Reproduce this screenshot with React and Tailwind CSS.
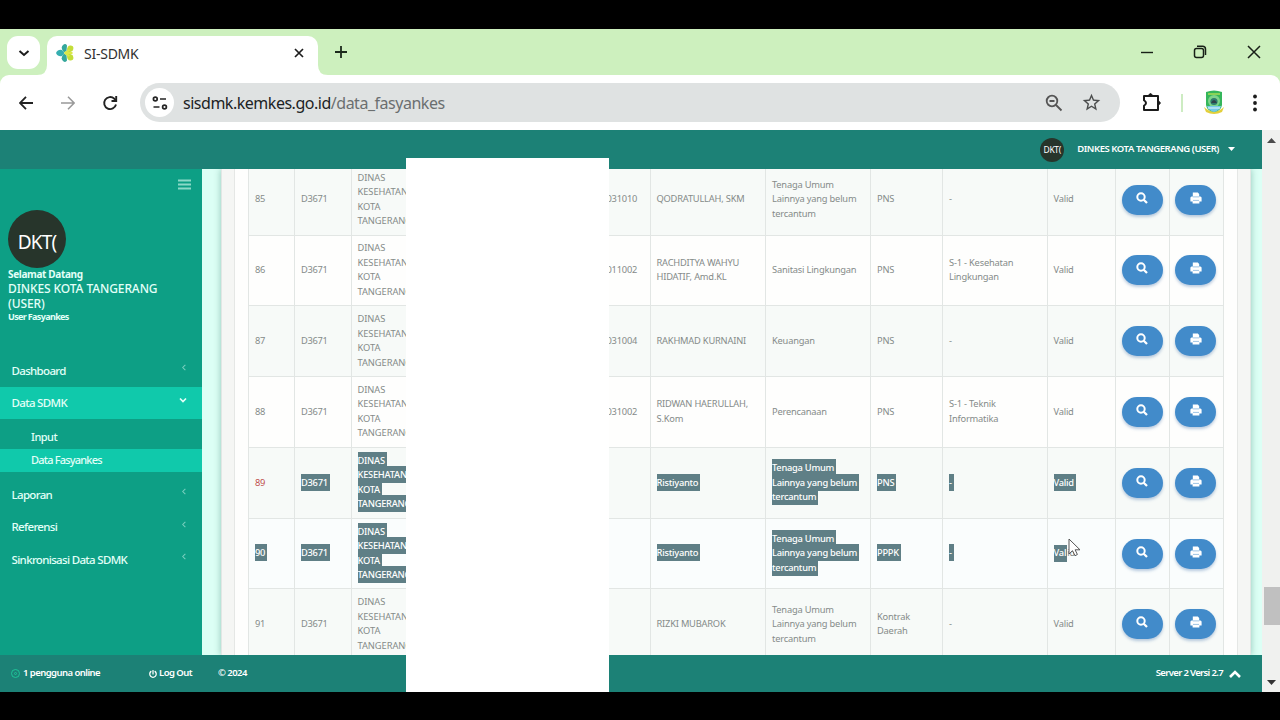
import { FaPowerOff } from "react-icons/fa";
import { MdOutlineStarBorder } from "react-icons/md";

const dinas = ["DINAS", "KESEHATAN", "KOTA", "TANGERANG"];
const umum = ["Tenaga Umum", "Lainnya yang belum", "tercantum"];

const rows = [
  { no: "85", nik: "031010", nama: ["QODRATULLAH, SKM"], jenis: umum, status: ["PNS"], didik: ["-"] },
  { no: "86", nik: "011002", nama: ["RACHDITYA WAHYU", "HIDATIF, Amd.KL"], jenis: ["Sanitasi Lingkungan"], status: ["PNS"], didik: ["S-1 - Kesehatan", "Lingkungan"] },
  { no: "87", nik: "031004", nama: ["RAKHMAD KURNAINI"], jenis: ["Keuangan"], status: ["PNS"], didik: ["-"] },
  { no: "88", nik: "031002", nama: ["RIDWAN HAERULLAH,", "S.Kom"], jenis: ["Perencanaan"], status: ["PNS"], didik: ["S-1 - Teknik", "Informatika"] },
  { no: "89", nik: "", nama: ["Ristiyanto"], jenis: umum, status: ["PNS"], didik: ["-"], selected: true, red: true },
  { no: "90", nik: "", nama: ["Ristiyanto"], jenis: umum, status: ["PPPK"], didik: ["-"], selected: true, partial: true },
  { no: "91", nik: "", nama: ["RIZKI MUBAROK"], jenis: umum, status: ["Kontrak", "Daerah"], didik: ["-"] },
];

const SELECTED = "bg-[#5f7f86] text-white font-medium tracking-[-0.25px] py-[2px] pr-[2px]";

function Cell({ lines, selected, className = "pl-[6px]" }) {
  return (
    <div
      className={`flex flex-col justify-center border-r border-b border-[#e2e6e4] whitespace-nowrap overflow-hidden ${className}`}
    >
      {lines.map((line) => (
        <div key={line} className="h-[14.5px] leading-[14.5px]">
          <span className={selected ? SELECTED : ""}>{line}</span>
        </div>
      ))}
    </div>
  );
}

function RoundButton({ children }) {
  return (
    <div className="flex items-center justify-center border-r border-b border-[#e2e6e4]">
      <button className="mr-[1px] flex h-[30px] w-[41px] items-center justify-center rounded-[15px] bg-[#428bca] pb-[4px] text-white shadow-[0_2px_3px_rgba(60,110,170,0.35)]">
        {children}
      </button>
    </div>
  );
}

function SearchIcon() {
  return (
    <svg viewBox="0 0 12 12" className="size-[12px]" fill="none" stroke="currentColor" strokeWidth="2">
      <circle cx="5" cy="5" r="3.7" />
      <path d="m7.7 7.7 3.3 3.3" strokeWidth="2.3" />
    </svg>
  );
}

function PrintIcon() {
  return (
    <svg viewBox="0 0 12 12" className="size-[12px]" fill="currentColor">
      <path d="M2.8.5h5l1.4 1.4V5H2.800Z" />
      <path d="M1.600 4.500h8.800Q11.600 4.500 11.600 6v3.500H.4V6q0-1.500 1.200-1.500Z" />
      <path d="M2.600 8h6.800v3.500H2.600Z" />
      <path d="M2.800 4.900h6.400M3 8.400h6" stroke="#5b9bd2" strokeWidth=".6" />
    </svg>
  );
}

function TableRow({ row, striped }) {
  const sel = row.selected;
  return (
    <div
      className={`grid h-[70.8px] shrink-0 grid-cols-[46px_56.5px_80px_219px_115.5px_105px_72px_104.5px_68.5px_54px_53.5px] border-l border-[#e2e6e4] ${striped ? "bg-[#f7faf8]" : row.partial ? "bg-[#fafdfd]" : "bg-[#fefefd]"}`}
    >
      <Cell lines={[row.no]} selected={sel && !row.red} className={row.red ? "pl-[6px] text-[#c0504d]" : "pl-[6px]"} />
      <Cell lines={["D3671"]} selected={sel} className="pl-[6px] tracking-[-0.3px]" />
      <Cell lines={dinas} selected={sel} className="pl-[6px] tracking-[-0.05px]" />
      <Cell lines={[row.nik]} className="pl-[175px]" />
      <Cell lines={row.nama} selected={sel} />
      <Cell lines={row.jenis} selected={sel} />
      <Cell lines={row.status} selected={sel} />
      <Cell lines={row.didik} selected={sel} />
      {row.partial ? (
        <div className="flex items-center border-r border-b border-[#e2e6e4] pl-[6px] leading-[12.5px]">
          <span className="bg-[#5f7f86] py-[2px] pr-[1px] font-medium text-white">Val</span>
          <span>id</span>
        </div>
      ) : (
        <Cell lines={["Valid"]} selected={sel} />
      )}
      <RoundButton>
        <SearchIcon />
      </RoundButton>
      <RoundButton>
        <PrintIcon />
      </RoundButton>
    </div>
  );
}

function Favicon() {
  return (
    <svg viewBox="0 0 18 18" className="size-[18px]">
      <path d="M7 1q2.500-2 4 .5L10.500 7 8 8.500Q4 4 7 1Z" fill="#35a79c" />
      <path d="M7 17q2.500 2 4-.5L10.500 11 8 9.500Q4 14 7 17Z" fill="#35a79c" />
      <path d="M0 9q2-4 6-3L8.500 9 6 12Q2 13 0 9Z" fill="#36aeb0" />
      <path d="M11 6.500q0-5.500 4-5T16.500 7L12 9Z" fill="#c3dd3a" />
      <path d="M11 11.500q0 5.500 4 5t1.500-5.500L12 9Z" fill="#c3dd3a" />
      <path d="M8.500 9l5-3M8.500 9h8M8.500 9l5 3" stroke="#dbe84a" strokeWidth="1.800" />
    </svg>
  );
}

function Crest() {
  return (
    <svg viewBox="0 0 22 24" className="h-[24px] w-[22px]">
      <path d="M1 17q10 9 20 0l-2 5q-8 4-16 0Z" fill="#e3cf3c" />
      <path d="M3 2q8-3 16 0v13q-1 6-8 7-7-1-8-7Z" fill="#35b65b" />
      <path d="M5 4h12" stroke="#a8dc54" strokeWidth="1.5" />
      <circle cx="11" cy="11" r="6" fill="#7ed38b" />
      <circle cx="11" cy="11.5" r="3.6" fill="#2f7b6d" />
      <path d="M8 13q3-6 6 0Z" fill="#30404a" />
      <path d="M4 16h14q-1 4-7 6-6-2-7-6Z" fill="#76c9e8" />
      <path d="M5 18h12" stroke="#e5f8ff" />
    </svg>
  );
}

function TabStrip() {
  return (
    <div className="flex h-[46px] bg-[#cdf0be]">
      <div className="mt-[7px] ml-[7px] flex size-[33px] items-center justify-center rounded-[11px] bg-white">
        <svg viewBox="0 0 12 12" className="size-[12px]" fill="none" stroke="#1c1c1c" strokeWidth="2">
          <path d="m1.5 4 4.5 4 4.5-4" />
        </svg>
      </div>
      <svg viewBox="0 0 10 10" className="-ml-[3px] size-[10px] self-end" fill="#fff">
        <path d="M10 0v10H0Q10 10 10 0Z" />
      </svg>
      <div className="mt-[7px] flex w-[271px] items-center rounded-t-[10px] bg-white pr-[14px] pb-[5px] pl-[9px]">
        <Favicon />
        <span className="ml-[10px] flex-1 text-[14px] tracking-[-0.25px] text-[#303030]">SI-SDMK</span>
        <svg viewBox="0 0 10 10" className="size-[10px]" stroke="#1d1d1d" strokeWidth="1.7">
          <path d="m1 1 8 8M9 1 1 9" />
        </svg>
      </div>
      <svg viewBox="0 0 10 10" className="size-[10px] self-end" fill="#fff">
        <path d="M0 0v10h10Q0 10 0 0Z" />
      </svg>
      <svg viewBox="0 0 14 14" className="mt-[16px] ml-[6px] size-[14px]" stroke="#1c2a1c" strokeWidth="1.8">
        <path d="M7 1v12M1 7h12" />
      </svg>
      <div className="mt-[16px] mr-[19px] ml-auto flex gap-[40px]">
        <svg viewBox="0 0 14 14" className="size-[14px]" stroke="#182018" strokeWidth="1.4">
          <path d="M1 7.500h12" />
        </svg>
        <svg viewBox="0 0 14 14" className="ml-[-1px] size-[14px]" fill="none" stroke="#182018" strokeWidth="1.5">
          <rect x="1.5" y="3.5" width="9" height="9" rx="2" />
          <path d="M4 1.300h5.500q3 0 3 3V10" />
        </svg>
        <svg viewBox="0 0 14 14" className="size-[14px]" stroke="#182018" strokeWidth="1.5">
          <path d="m1 1 12 12M13 1 1 13" />
        </svg>
      </div>
    </div>
  );
}

function Toolbar() {
  return (
    <div className="bg-[#cdf0be]">
      <div className="flex h-[55px] items-center rounded-t-[9px] bg-white pl-[19px]">
        <svg viewBox="0 0 14 14" className="size-[14px]" fill="none" stroke="#222" strokeWidth="1.8">
          <path d="M14 7H1M7 .8.9 7 7 13.2" />
        </svg>
        <svg viewBox="0 0 14 14" className="ml-[28px] size-[14px]" fill="none" stroke="#999" strokeWidth="1.5">
          <path d="M0 7h13M7 .8 13.1 7 7 13.2" />
        </svg>
        <svg viewBox="0 0 16 16" className="ml-[27px] size-[16px]" fill="none" stroke="#222" strokeWidth="1.9">
          <path d="M14 9.500A6 6 0 1 1 12.300 3.700L14 5.500" />
          <path d="M14.200 1v5H9.500" />
        </svg>
        <div className="ml-[22px] flex h-[39px] w-[980px] items-center rounded-full bg-[#dfe2e2] pr-[18px] pl-[5px]">
          <div className="flex size-[29px] items-center justify-center rounded-full bg-white">
            <svg viewBox="0 0 16 14" className="h-[14px] w-[16px]" fill="none" stroke="#252525" strokeWidth="1.7">
              <circle cx="3.3" cy="3" r="1.9" />
              <path d="M8 3h6M1.500 11h6" />
              <circle cx="12.5" cy="11" r="1.9" />
            </svg>
          </div>
          <span className="ml-[9px] flex-1 text-[16px] tracking-[-0.48px] text-[#6b6f70]">
            <span className="text-[#202324]">sisdmk.kemkes.go.id</span>/data_fasyankes
          </span>
          <svg viewBox="0 0 18 18" className="size-[18px]" fill="none" stroke="#555" strokeWidth="1.8">
            <circle cx="7" cy="7" r="5.3" />
            <path d="m11 11 5.500 5.500M4.500 7h5" />
          </svg>
          <MdOutlineStarBorder className="ml-[18px] size-[21px] text-[#4b4d4d]" />
        </div>
        <svg viewBox="0 0 20 20" className="ml-[21px] size-[20px] -translate-y-[1px]" fill="none" stroke="#1b1b1b" strokeWidth="2">
          <path d="M3 4h14v14H3v-4.200q4-2.800 0-5.600Z" strokeLinejoin="round" />
          <path d="M7.500 3.500q2-4 4 0M17.500 9q3.500 2 0 4" fill="#1b1b1b" strokeWidth="1" />
        </svg>
        <div className="ml-[20px] h-[18px] w-[2px] bg-[#cdecc2]" />
        <div className="ml-[20px] pb-[1px]">
          <Crest />
        </div>
        <svg viewBox="0 0 4 18" className="ml-[28px] h-[18px] w-[4px]" fill="#1b1b1b">
          <circle cx="2" cy="2.5" r="1.9" />
          <circle cx="2" cy="9" r="1.9" />
          <circle cx="2" cy="15.5" r="1.9" />
        </svg>
      </div>
    </div>
  );
}

function MenuItem({ label, open }) {
  return (
    <div
      className={`flex h-[32.3px] shrink-0 items-center justify-between pr-[14px] pl-[11.5px] text-[11.5px] font-medium tracking-[-0.67px] ${open ? "bg-[#10c9ab]" : ""}`}
    >
      <span>{label}</span>
      <svg
        viewBox="0 0 8 8"
        className={open ? "mr-[1px] mb-[6px] size-[8px]" : "mb-[6px] size-[7px] opacity-50"}
        fill="none"
        stroke="currentColor"
        strokeWidth={open ? 1.7 : 1.2}
      >
        <path d={open ? "m1 2.500 3 3 3-3" : "M5 1 2 4l3 3"} />
      </svg>
    </div>
  );
}

function Sidebar() {
  return (
    <aside className="flex w-[202px] shrink-0 flex-col bg-[#0d9f85] text-[#e3fff8]">
      <svg viewBox="0 0 13 11" className="mt-[10px] mr-[11px] h-[11px] w-[13px] self-end" stroke="#8bd9c8" strokeWidth="2">
        <path d="M0 1.500h13M0 5.500h13M0 9.500h13" />
      </svg>
      <div className="mt-[20px] ml-[8px] flex size-[58px] items-center justify-center overflow-hidden rounded-full bg-[#27352b] pt-[6px] text-[19px] tracking-[-0.8px] text-white">
        DKT(
      </div>
      <div className="h-[62px] pl-[8px]">
        <p className="h-[13px] text-[10px] leading-[13px] font-bold tracking-[-0.35px]">Selamat Datang</p>
        <p className="text-[12px] leading-[15px] font-medium tracking-[-0.1px]">
          DINKES KOTA TANGERANG
          <br />
          (USER)
        </p>
        <p className="text-[9px] leading-[12px] font-bold tracking-[-0.65px]">User Fasyankes</p>
      </div>
      <nav className="mt-[24.5px] flex flex-col">
        <MenuItem label="Dashboard" />
        <MenuItem label="Data SDMK" open />
        <div className="flex h-[59.5px] flex-col pt-[7px] text-[11px] font-medium tracking-[-0.8px]">
          <div className="flex h-[23px] items-center pb-[1px] pl-[31px] tracking-[-0.5px]">Input</div>
          <div className="flex h-[23px] items-center bg-[#10c9ab] pb-[1px] pl-[31px]">Data Fasyankes</div>
        </div>
        <MenuItem label="Laporan" />
        <MenuItem label="Referensi" />
        <MenuItem label="Sinkronisasi Data SDMK" />
      </nav>
    </aside>
  );
}

function Header() {
  return (
    <header className="flex h-[39px] shrink-0 items-center justify-end bg-[#1c8176] pr-[27px] text-white">
      <div className="flex size-[24px] items-center justify-center rounded-full bg-[#27352b] pt-[2px] text-[8.5px] tracking-[-0.3px]">
        DKT(
      </div>
      <span className="ml-[13px] pb-[1px] text-[9.5px] font-semibold tracking-[-0.44px]">DINKES KOTA TANGERANG (USER)</span>
      <svg viewBox="0 0 7 4" className="mb-[2px] ml-[9px] h-[4px] w-[7px]" fill="#fff">
        <path d="M0 0h7L3.5 4Z" />
      </svg>
    </header>
  );
}

function Footer() {
  return (
    <footer className="flex h-[37px] shrink-0 items-center bg-[#1c8176] pr-[21px] pl-[11px] text-[9.5px] font-semibold tracking-[-0.55px] text-white">
      <div className="flex w-[138px] items-center gap-[3px]">
        <svg viewBox="0 0 9 9" className="size-[9px]" fill="none" stroke="#1fc498">
          <circle cx="4.5" cy="4.5" r="4" />
          <circle cx="4.5" cy="4.5" r="1" />
        </svg>
        1 pengguna online
      </div>
      <div className="flex w-[69px] items-center gap-[2px]">
        <FaPowerOff className="size-[8px]" />
        Log Out
      </div>
      <span>© 2024</span>
      <span className="ml-auto tracking-[-0.65px]">Server 2 Versi 2.7</span>
      <svg viewBox="0 0 12 8" className="ml-[6px] h-[8px] w-[12px]" fill="none" stroke="#fff" strokeWidth="2.6">
        <path d="m1 7 5-5 5 5" />
      </svg>
    </footer>
  );
}

function Scrollbar() {
  return (
    <div className="flex w-[18px] flex-col items-center bg-[#f0f1ef]">
      <svg viewBox="0 0 9 5" className="mt-[8px] h-[5px] w-[9px]" fill="#4b4b4b">
        <path d="M0 5h9L4.5 0Z" />
      </svg>
      <div className="mt-[444px] h-[38px] w-[16px] self-end bg-[#c0c0c0]" />
      <svg viewBox="0 0 9 5" className="mt-auto mb-[7px] h-[5px] w-[9px]" fill="#333">
        <path d="M0 0h9L4.5 5Z" />
      </svg>
    </div>
  );
}

export default function App() {
  return (
    <div className="relative h-[720px] w-[1280px] overflow-hidden bg-black pt-[29px] font-['Noto_Sans','Open_Sans',sans-serif]">
      <TabStrip />
      <Toolbar />

      <div className="flex h-[562px]">
        <div className="flex w-[1262px] flex-col">
          <Header />
          <div className="flex min-h-0 flex-1">
            <Sidebar />
            <main className="flex flex-1 overflow-hidden bg-[#dcfff5]">
              <div className="ml-[19px] w-[1030px] border-x border-[#e2e6e4] bg-[#f5f6f4] px-[12px] shadow-[0_0_7px_rgba(0,90,70,0.35)]">
                <div className="flow-root h-full border-x border-[#e5e7e5] bg-[#fefefd] pl-[13px]">
                  <div className="-mt-[4.3px] w-[975.5px] text-[9.3px] tracking-[-0.2px] text-[#858b89]">
                    {rows.map((row, i) => (
                      <TableRow key={row.no} row={row} striped={i % 2 === 0} />
                    ))}
                  </div>
                </div>
              </div>
            </main>
          </div>
          <Footer />
        </div>
        <Scrollbar />
      </div>

      {/* Blank cover over the NIK columns */}
      <div className="absolute top-[158px] left-[406px] h-[534px] w-[203px] bg-white" />

      {/* Mouse pointer */}
      <svg
        viewBox="0 0 13 19"
        className="absolute top-[538px] left-[1068px] h-[19px] w-[13px]"
        fill="#fff"
        stroke="#555"
        strokeWidth="1"
      >
        <path d="M1 1v15l3.5-3.3 2.500 5 2.400-1.200-2.300-4.700H12Z" />
      </svg>
    </div>
  );
}
